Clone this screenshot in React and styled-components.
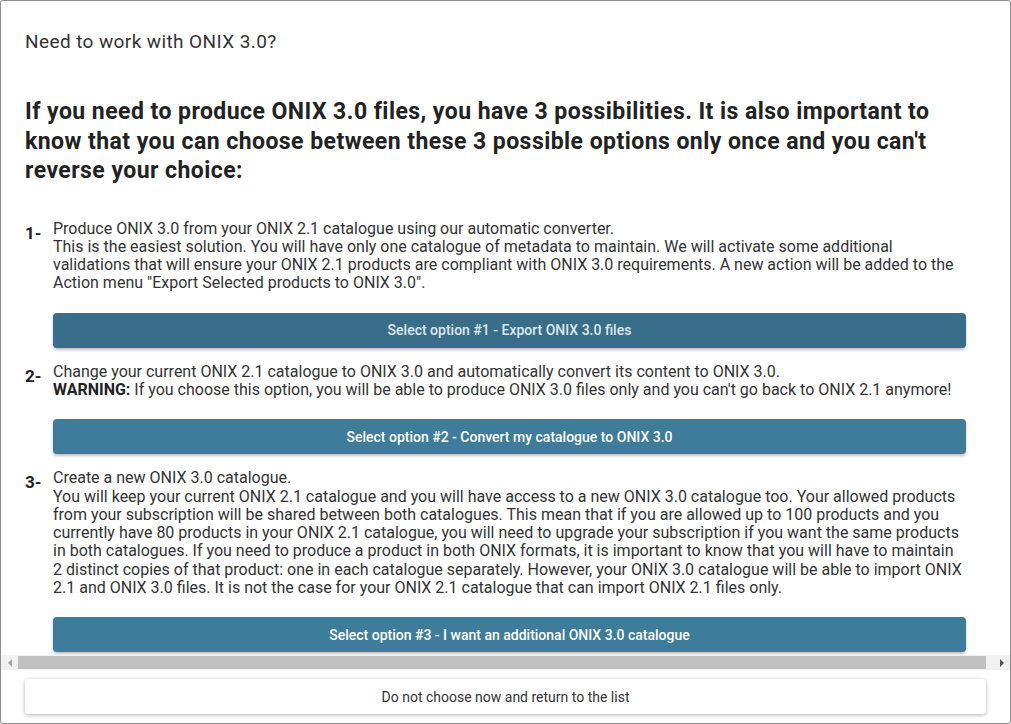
import React from "react";
import styled, { createGlobalStyle } from "styled-components";

const GlobalStyle = createGlobalStyle`
    html, body {
        margin: 0;
        padding: 0;
        background: #ffffff;
        font-family: Roboto, "Liberation Sans", sans-serif;
    }
`;

const options = [
    {
        num: "1-",
        lines: [
            "Produce ONIX 3.0 from your ONIX 2.1 catalogue using our automatic converter.",
            "This is the easiest solution. You will have only one catalogue of metadata to maintain. We will activate some additional validations that will ensure your ONIX 2.1 products are compliant with ONIX 3.0 requirements. A new action will be added to the Action menu \"Export Selected products to ONIX 3.0\".",
        ],
        button: "Select option #1 - Export ONIX 3.0 files",
        active: true,
    },
    {
        num: "2-",
        lines: [
            "Change your current ONIX 2.1 catalogue to ONIX 3.0 and automatically convert its content to ONIX 3.0.",
            <>
                <b>WARNING:</b> If you choose this option, you will be able to produce ONIX 3.0 files only and you can't go back to ONIX 2.1 anymore!
            </>,
        ],
        button: "Select option #2 - Convert my catalogue to ONIX 3.0",
    },
    {
        num: "3-",
        lines: [
            "Create a new ONIX 3.0 catalogue.",
            "You will keep your current ONIX 2.1 catalogue and you will have access to a new ONIX 3.0 catalogue too. Your allowed products from your subscription will be shared between both catalogues. This mean that if you are allowed up to 100 products and you currently have 80 products in your ONIX 2.1 catalogue, you will need to upgrade your subscription if you want the same products in both catalogues. If you need to produce a product in both ONIX formats, it is important to know that you will have to maintain 2 distinct copies of that product: one in each catalogue separately. However, your ONIX 3.0 catalogue will be able to import ONIX 2.1 and ONIX 3.0 files. It is not the case for your ONIX 2.1 catalogue that can import ONIX 2.1 files only.",
        ],
        button: "Select option #3 - I want an additional ONIX 3.0 catalogue",
    },
];

const App = () => {
    return (
        <>
            <GlobalStyle />
            <Dialog>
                <Header>Need to work with ONIX 3.0?</Header>
                <Body>
                    <Intro>
                        If you need to produce ONIX 3.0 files, you have 3 possibilities. It is also important to know that you can choose between these 3 possible options only once and you can't reverse your choice:
                    </Intro>
                    {options.map((opt, index) => (
                        <Option key={index}>
                            <Number>{opt.num}</Number>
                            <div>
                                <Text>
                                    {opt.lines.map((line, i) => (
                                        <Line key={i}>{line}</Line>
                                    ))}
                                </Text>
                                <OptionButton $active={opt.active}>{opt.button}</OptionButton>
                            </div>
                        </Option>
                    ))}
                </Body>
                <ScrollBar>
                    <ScrollArrow $dir="left" />
                    <ScrollTrack>
                        <ScrollThumb />
                    </ScrollTrack>
                    <ScrollArrow $dir="right" />
                </ScrollBar>
                <Footer>
                    <CancelButton>Do not choose now and return to the list</CancelButton>
                </Footer>
            </Dialog>
        </>
    );
};

const Dialog = styled.div`
    box-sizing: border-box;
    width: 1011px;
    height: 724px;
    border: 1px solid #8c8c8c;
    border-radius: 3px;
    background: #fff;
    display: flex;
    flex-direction: column;
    overflow: hidden;
    color: #333;
`;

const Header = styled.div`
    padding: 30px 24px 0;
    font-size: 19px;
    letter-spacing: 0.4px;
    line-height: 22px;
    color: #333;
`;

const Body = styled.div`
    flex: 1;
    min-height: 0;
    overflow: hidden;
    padding: 0 44px 0 24px;
`;

const Intro = styled.h2`
    margin: 44px 0 34px;
    font-size: 23px;
    letter-spacing: 0.45px;
    line-height: 29.5px;
    font-weight: 700;
    color: #222;
`;

const Option = styled.div`
    display: grid;
    grid-template-columns: 28px 1fr;
    margin-bottom: 15px;
`;

const Number = styled.div`
    font-size: 17px;
    font-weight: 700;
    color: #222;
    padding-top: 4px;
    line-height: 18px;
`;

const Text = styled.div`
    font-size: 16px;
    line-height: 18.3px;
    color: #333;
    margin-bottom: 20px;
`;

const Line = styled.div`
    b {
        font-weight: 700;
        color: #222;
    }
`;

const OptionButton = styled.button`
    display: block;
    width: 100%;
    height: 35px;
    border: 0;
    border-radius: 4px;
    background: ${(p) => (p.$active ? "#386e89" : "#3d7c9a")};
    color: ${(p) => (p.$active ? "#dfe7ec" : "#ffffff")};
    font-family: Roboto, "Liberation Sans", sans-serif;
    font-size: 14px;
    font-weight: 500;
    box-shadow: 0 2px 3px rgba(0, 0, 0, 0.25);
    cursor: pointer;
`;

const ScrollBar = styled.div`
    flex: none;
    height: 15px;
    display: flex;
    align-items: stretch;
    background: #f1f1f1;
`;

const ScrollArrow = styled.div`
    width: 17px;
    display: flex;
    align-items: center;
    justify-content: center;
    &::before {
        content: "";
        width: 0;
        height: 0;
        border-top: 4px solid transparent;
        border-bottom: 4px solid transparent;
        ${(p) => (p.$dir === "left" ? "border-right: 4px solid #a3a3a3;" : "border-left: 4px solid #505050;")}
    }
`;

const ScrollTrack = styled.div`
    flex: 1;
    display: flex;
    align-items: center;
`;

const ScrollThumb = styled.div`
    width: calc(100% - 7px);
    height: 13px;
    background: #c1c1c1;
`;

const Footer = styled.div`
    flex: none;
    padding: 9px 24px 9px;
`;

const CancelButton = styled.button`
    display: block;
    width: 100%;
    height: 35px;
    border: 0;
    border-radius: 4px;
    background: #fff;
    color: #333;
    font-family: Roboto, "Liberation Sans", sans-serif;
    font-size: 14px;
    box-shadow: 0 1px 4px rgba(0, 0, 0, 0.3);
    cursor: pointer;
`;

export default App;
